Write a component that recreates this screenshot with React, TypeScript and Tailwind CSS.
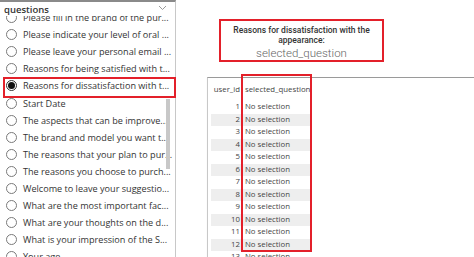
import React from "react";

const items = [
  "Please fill in the brand of the pur...",
  "Please indicate your level of oral ...",
  "Please leave your personal email ...",
  "Reasons for being satisfied with t...",
  "Reasons for dissatisfaction with t...",
  "Start Date",
  "The aspects that can be improve...",
  "The brand and model you want t...",
  "The reasons that your plan to pur...",
  "The reasons you choose to purch...",
  "Welcome to leave your suggestio...",
  "What are the most important fac...",
  "What are your thoughts on the d...",
  "What is your impression of the S...",
  "Your age",
];

const rows = Array.from({ length: 13 }, (_, i) => i + 1);

export default function App() {
  return (
    <div
      className="relative flex w-[474px] h-[257px] overflow-hidden bg-white"
      style={{ fontFamily: '"Open Sans", "Noto Sans", sans-serif' }}
    >
      {/* Left slicer panel */}
      <div className="relative flex flex-col w-[176px] h-full border-t-2 border-r border-t-[#8a8a8a] border-r-[#c8c8c8] shrink-0">
        <div className="relative z-10 h-[14px] bg-white">
          <span className="absolute left-[4px] top-[2px] text-[9.5px] leading-[12px] font-semibold text-[#333]">
            questions
          </span>
          <svg
            className="absolute left-[158px] top-[3px]"
            width="9"
            height="6"
            viewBox="0 0 9 6"
          >
            <path d="M1 1 L4.5 4.5 L8 1" fill="none" stroke="#9a9a9a" strokeWidth="1" />
          </svg>
        </div>
        <div className="flex-1 overflow-hidden">
          <div className="-mt-[7px] flex flex-col">
            {items.map((t, i) => (
              <div key={i} className="flex items-center h-[17.1px] pl-[6px]">
                <span
                  className={
                    "flex items-center justify-center w-[11px] h-[11px] rounded-full border shrink-0 " +
                    (i === 4 ? "border-[#333]" : "border-[#7a7a7a]")
                  }
                >
                  {i === 4 && <span className="w-[7px] h-[7px] rounded-full bg-[#111]" />}
                </span>
                <span className="ml-[6px] text-[9.1px] leading-[13px] whitespace-nowrap text-[#333]">
                  {t}
                </span>
              </div>
            ))}
          </div>
        </div>
        {/* scrollbar thumb */}
        <div className="absolute left-[166px] top-[97px] w-[4px] h-[70px] bg-[#c8c8c8]" />
        {/* selection annotation */}
        <div className="absolute left-[3px] top-[75px] w-[173px] h-[21px] border-2 border-[#e3202a]" />
      </div>

      {/* Right area */}
      <div className="flex flex-col flex-1 pl-[31px]">
        <div
          className="ml-[12px] mt-[19px] w-[165px] h-[46px] border-2 border-[#e3202a] flex flex-col items-center pt-[4px] text-center"
          style={{ fontFamily: '"Roboto", "Liberation Sans", sans-serif' }}
        >
          <div className="text-[8.5px] leading-[10px] font-medium text-[#333]">
            Reasons for dissatisfaction with the
            <br />
            appearance:
          </div>
          <div className="mt-[2px] text-[11.5px] leading-[13px] font-light text-[#666]">
            selected_question
          </div>
        </div>

        <div className="relative mt-[15px] flex-1 border-t border-l border-t-[#9a9a9a] border-l-[#c8c8c8] shadow-[0_1px_1px_rgba(0,0,0,0.08)]">
          <div className="flex items-center h-[23px] text-[7.8px] text-[#444]">
            <div className="w-[33px] text-right pr-[1px]">user_id</div>
            <div className="pl-[4px]">selected_question</div>
          </div>
          {rows.map((r) => (
            <div
              key={r}
              className={
                "flex items-center h-[12.5px] ml-[3px] mr-[164px] text-[7.8px] text-[#444] " +
                (r % 2 === 0 ? "bg-[#eeeeee]" : "bg-white")
              }
            >
              <div className="w-[30px] text-right pr-[1px]">{r}</div>
              <div className="pl-[4px]">No selection</div>
            </div>
          ))}
          {/* column annotation */}
          <div className="absolute left-[33px] -top-[4px] w-[71px] h-[178px] border-2 border-[#e3202a]" />
        </div>
      </div>
    </div>
  );
}
